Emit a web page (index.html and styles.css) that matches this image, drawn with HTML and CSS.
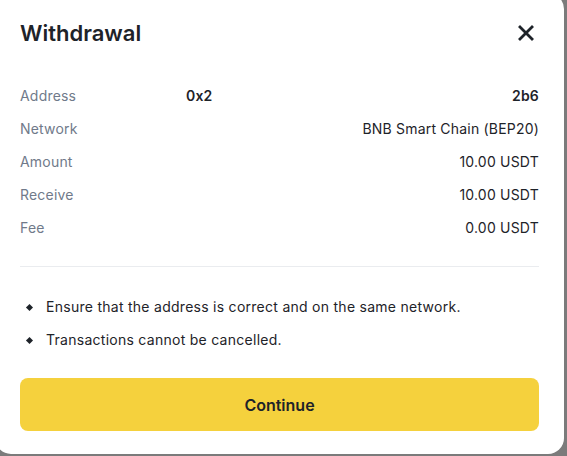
FILE: index.html
```html
<!DOCTYPE html>
<html lang="en">
<head>
    <meta charset="UTF-8">
    <meta name="viewport" content="width=device-width, initial-scale=1.0">
    <title>Withdrawal</title>
    <link rel="stylesheet" href="styles.css">
</head>
<body>
    <div class="modal">
        <div class="modal-header">
            <h2 class="modal-title">Withdrawal</h2>
            <button class="close-btn" type="button" aria-label="Close">
                <svg width="16" height="16" viewBox="0 0 16 16">
                    <path d="M2 2 L14 14 M14 2 L2 14" stroke="#1e2329" stroke-width="2.8" stroke-linecap="square" fill="none"/>
                </svg>
            </button>
        </div>

        <div class="details">
            <div class="detail-row">
                <span class="label">Address</span>
                <span class="value address">
                    <b>0x2</b>
                    <b>2b6</b>
                </span>
            </div>
            <div class="detail-row">
                <span class="label">Network</span>
                <span class="value">BNB Smart Chain (BEP20)</span>
            </div>
            <div class="detail-row">
                <span class="label">Amount</span>
                <span class="value">10.00 USDT</span>
            </div>
            <div class="detail-row">
                <span class="label">Receive</span>
                <span class="value">10.00 USDT</span>
            </div>
            <div class="detail-row">
                <span class="label">Fee</span>
                <span class="value">0.00 USDT</span>
            </div>
        </div>

        <ul class="notes">
            <li>Ensure that the address is correct and on the same network.</li>
            <li>Transactions cannot be cancelled.</li>
        </ul>

        <button class="continue-btn" type="button">Continue</button>
    </div>
</body>
</html>
```

FILE: styles.css
```css
body {
    margin: 0;
    background-color: #7b7b7b;
    font-family: Inter, Roboto, "Liberation Sans", sans-serif;
    color: #1e2329;
    overflow: hidden;
}
.modal {
    box-sizing: border-box;
    width: 569px;
    height: 461px;
    margin: -7px 0 0 -5px;
    padding: 0 25px;
    background-color: #fff;
    border-radius: 16px;
}
.modal-header {
    height: 80px;
    display: flex;
    align-items: center;
    justify-content: space-between;
}
.modal-title {
    margin: 0;
    font-size: 22px;
    font-weight: 600;
    line-height: 32px;
}
.close-btn {
    width: 16px;
    height: 16px;
    padding: 0;
    margin-right: 5px;
    border: none;
    background: none;
    cursor: pointer;
    display: flex;
}
.details {
    margin-top: 13px;
    padding-bottom: 28px;
    border-bottom: 1px solid #eaecef;
    display: flex;
    flex-direction: column;
    gap: 13px;
}
.detail-row {
    display: grid;
    grid-template-columns: 166px 1fr;
    font-size: 14px;
    line-height: 20px;
    letter-spacing: 0.2px;
}
.label {
    color: #707a8a;
}
.value {
    text-align: right;
}
.address {
    display: flex;
    justify-content: space-between;
}
.address b {
    font-weight: 600;
}
.notes {
    list-style: none;
    margin: 30px 0 0;
    padding: 0;
    display: flex;
    flex-direction: column;
    gap: 13px;
}
.notes li {
    display: flex;
    align-items: center;
    font-size: 14px;
    line-height: 20px;
    letter-spacing: 0.27px;
}
.notes li::before {
    content: "";
    width: 5px;
    height: 5px;
    margin: 0 14px 0 7px;
    background-color: #1e2329;
    transform: rotate(45deg);
}
.continue-btn {
    width: 100%;
    height: 53px;
    margin-top: 28px;
    padding-top: 2px;
    border: none;
    border-radius: 8px;
    background-color: #f5d13d;
    color: #1e2329;
    font-family: inherit;
    font-size: 16px;
    font-weight: 600;
    cursor: pointer;
}
```
